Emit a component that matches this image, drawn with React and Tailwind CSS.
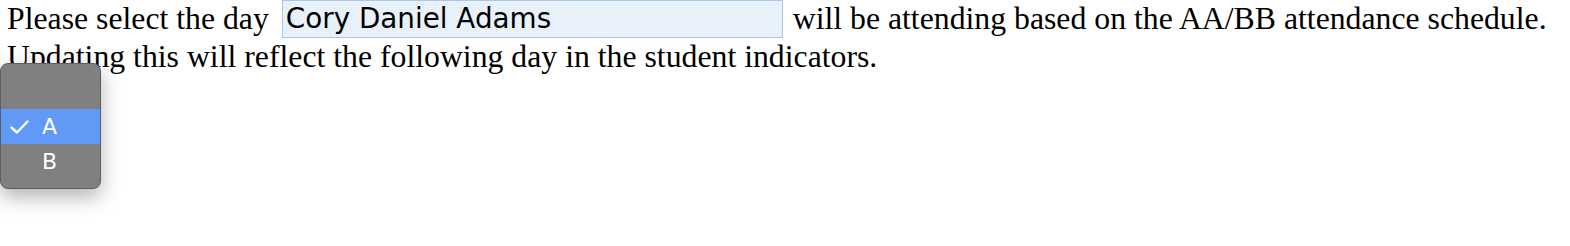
import React from 'react';

export default function App() {
    return (
        <div className="relative w-[1570px] h-[246px] bg-white overflow-hidden">
            {/* Sentence with the name field */}
            <p className="pl-[7px] pr-[4px] text-[31.75px] leading-[38px] text-black" style={{ fontFamily: '"Liberation Serif", serif' }}>
                Please select the day{' '}
                <span
                    className="inline-block align-top w-[501px] h-[38px] ml-[5px] mr-[2px] pl-[3px] bg-[#e8f0fa] border border-[#a9c7e8] text-[27.8px] leading-[36px] text-black"
                    style={{ fontFamily: '"DejaVu Sans", sans-serif' }}
                >
                    Cory Daniel Adams
                </span>{' '}
                will be attending based on the AA/BB attendance schedule. Updating this will reflect the following day in the student indicators.
            </p>

            {/* Open select menu */}
            <div
                className="absolute left-0 top-[63px] w-[101px] h-[126px] py-[9px] bg-[#808080] border border-[#5e5e5e] rounded-[8px] shadow-[0_8px_20px_rgba(0,0,0,0.3)] text-white text-[22px]"
                style={{ fontFamily: '"DejaVu Sans", sans-serif' }}
            >
                <div className="h-[36px]" />
                <div className="h-[35px] bg-[#6199f6] flex items-center">
                    <span className="w-[41px] pl-[9px] flex items-center">
                        <svg width="19" height="14" viewBox="0 0 19 14" fill="none">
                            <path d="M1.5 7.5 L7 12.5 L17.5 1.5" stroke="white" strokeWidth="2.4" strokeLinecap="round" strokeLinejoin="round" />
                        </svg>
                    </span>
                    <span className="font-medium">A</span>
                </div>
                <div className="h-[35px] flex items-center">
                    <span className="w-[41px]" />
                    <span className="font-medium">B</span>
                </div>
            </div>
        </div>
    );
}
